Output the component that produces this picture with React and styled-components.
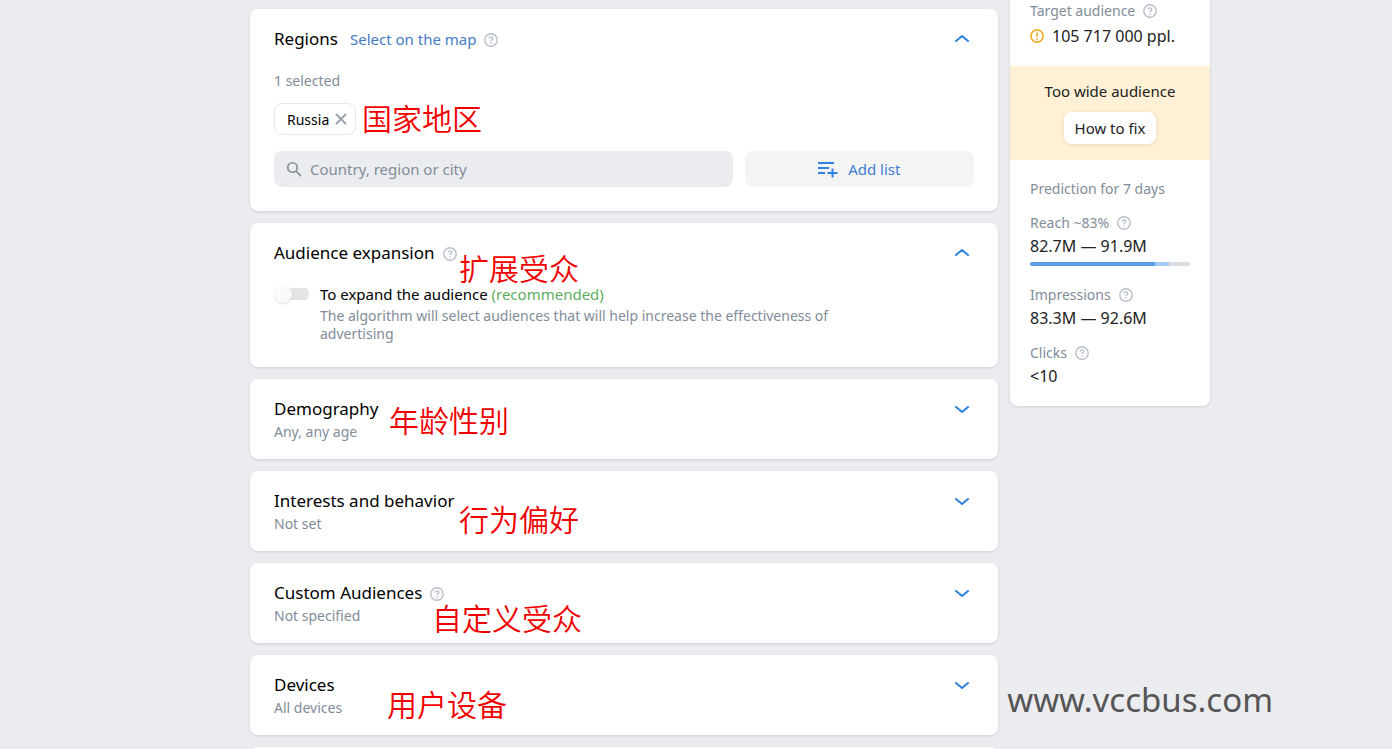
import React from 'react';
import styled, { createGlobalStyle } from 'styled-components';

const GlobalStyle = createGlobalStyle`
  * {
    box-sizing: border-box;
  }

  body {
    margin: 0;
    background: #ebecf0;
    font-family: "Noto Sans", "Noto Sans CJK SC", sans-serif;
    font-size: 14px;
    color: #000;
  }

  button, input {
    font-family: inherit;
  }
`
const Page = styled.div`
  position: relative;
  display: flex;
  align-items: flex-start;
  gap: 12px;
  height: 100vh;
  padding: 0 182px 0 250px;
  overflow: hidden;
`
const Main = styled.main`
  flex: 1;
  min-width: 0;
  display: flex;
  flex-direction: column;
  gap: 12px;
  padding-top: 9px;
`
const Card = styled.section`
  position: relative;
  min-height: 80px;
  padding: 18px 24px ${ props => props.$open ? '24px' : '16px' };
  background: #fff;
  border-radius: 8px;
  box-shadow: 0 1px 3px rgba(0, 16, 61, 0.12);
`
const HelpButton = styled.button`
  display: flex;
  margin-left: ${ props => props.$gap || '8px' };
  padding: 0;
  border: 0;
  background: none;
  color: #b9bfc9;
`
const CardHeader = styled.header`
  display: flex;
  align-items: center;
  height: 24px;
  margin-bottom: ${ props => props.$gap || '0' };

  ${HelpButton} {
    padding-top: 2px;
  }
`
const Title = styled.h2`
  margin: 0;
  font-size: 17px;
  font-weight: 400;
  line-height: 24px;
`
const MapLink = styled.a`
  margin-left: 12px;
  font-size: 15px;
  line-height: 24px;
  color: #447bc7;
  text-decoration: none;
`
const ToggleButton = styled.button`
  display: flex;
  margin-left: auto;
  padding: 0 4px;
  border: 0;
  background: none;
  color: #2d81e0;
`
const Muted = styled.div`
  font-size: 14px;
  line-height: 22px;
  color: #818c99;
`
const Tag = styled.div`
  display: inline-flex;
  align-items: center;
  gap: 6px;
  height: 32px;
  margin: 11px 0 16px;
  padding: 0 8px 0 12px;
  border: 1px solid #e7e8ec;
  border-radius: 8px;
  font-size: 14px;

  button {
    display: flex;
    padding: 0;
    border: 0;
    background: none;
    color: #99a2ad;
  }
`
const SearchRow = styled.div`
  display: grid;
  grid-template-columns: 2fr 1fr;
  gap: 12px;
`
const SearchBox = styled.label`
  display: flex;
  align-items: center;
  gap: 8px;
  height: 36px;
  padding: 0 12px;
  border-radius: 8px;
  background: #ebecf0;
  color: #818c99;

  input {
    flex: 1;
    min-width: 0;
    padding: 0;
    border: 0;
    outline: 0;
    background: none;
    font-size: 15px;
  }

  input::placeholder {
    color: #818c99;
    opacity: 1;
  }
`
const AddButton = styled.button`
  display: flex;
  align-items: center;
  justify-content: center;
  gap: 10px;
  height: 36px;
  border: 0;
  border-radius: 8px;
  background: #f4f4f5;
  color: #3f7fd4;
  font-size: 15px;
`
const SwitchRow = styled.div`
  display: flex;
  gap: 11px;
`
const Switch = styled.input`
  appearance: none;
  display: flex;
  align-items: center;
  width: 35px;
  height: 18px;
  margin: 2px 0;
  background: linear-gradient(#e5e5e6, #e5e5e6) right center / 30px 12px no-repeat;
  border-radius: 9px;

  &::before {
    content: '';
    width: 18px;
    height: 18px;
    border-radius: 50%;
    background: #fafafa;
    box-shadow: 0 1px 2px rgba(0, 0, 0, 0.14);
  }
`
const SwitchLabel = styled.label`
  font-size: 15px;
  line-height: 22px;

  span {
    color: #5caf60;
  }
`
const Description = styled.p`
  max-width: 540px;
  margin: 2px 0 0;
  font-size: 14px;
  line-height: 18px;
  color: #818c99;
`
const Note = styled.div`
  position: absolute;
  left: ${ props => props.$left };
  top: ${ props => props.$top };
  font-family: "Noto Sans CJK SC", sans-serif;
  font-size: 30px;
  font-weight: 350;
  line-height: 32px;
  white-space: nowrap;
  color: #f00000;
`
const Sidebar = styled.aside`
  flex: 0 0 200px;
  background: #fff;
  border-radius: 0 0 8px 8px;
  box-shadow: 0 1px 3px rgba(0, 16, 61, 0.12);
`
const SideSection = styled.div`
  padding: ${ props => props.$first ? '0' : '18px' } 20px 18px;
`
const SideLabel = styled.div`
  display: flex;
  align-items: center;
  font-size: 14px;
  line-height: 22px;
  color: #818c99;
`
const SideValue = styled.div`
  display: flex;
  align-items: center;
  gap: 8px;
  font-size: 16px;
  line-height: 24px;
  color: #222;
`
const Stat = styled.div`
  margin-top: ${ props => props.$gap || '12px' };
`
const Warning = styled.div`
  display: flex;
  flex-direction: column;
  align-items: center;
  gap: 10px;
  padding: 14px 20px 16px;
  background: #fff0d6;
  font-size: 15px;
  line-height: 22px;
  color: #222;

  button {
    height: 32px;
    padding: 0 11px;
    border: 0;
    border-radius: 8px;
    background: #fff;
    box-shadow: 0 1px 4px rgba(0, 0, 0, 0.1);
    font-size: 15px;
    color: #222;
  }
`
const ReachBar = styled.div`
  display: flex;
  height: 4px;
  margin-top: 4px;
  border-radius: 2px;
  background: #d9dde2;
  overflow: hidden;
`
const ReachPart = styled.div`
  background: ${ props => props.$color };
`
const Watermark = styled.div`
  position: absolute;
  right: 119px;
  bottom: 29px;
  font-size: 33px;
  line-height: 40px;
  color: #555;
`

const Help = ({ gap }) => (
  <HelpButton type="button" aria-label="Help" $gap={gap}>
    <svg width="14" height="14" viewBox="0 0 14 14" fill="none" stroke="currentColor">
      <circle cx="7" cy="7" r="6.2" strokeWidth="1.4" />
      <path d="M5.2 5.6C5.2 4.5 6 3.9 7 3.9s1.8.6 1.8 1.5C8.8 6.6 7 6.7 7 8.1" strokeWidth="1.3" />
      <circle cx="7" cy="9.9" r=".8" fill="currentColor" stroke="none" />
    </svg>
  </HelpButton>
)

const Chevron = ({ open, label }) => (
  <ToggleButton type="button" aria-label={label} aria-expanded={!!open}>
    <svg width="16" height="16" viewBox="0 0 16 16" fill="none" stroke="currentColor" strokeWidth="2" strokeLinecap="round" strokeLinejoin="round">
      <path d={open ? 'M2 10l6-5 6 5' : 'M2 6l6 5 6-5'} />
    </svg>
  </ToggleButton>
)

const sections = [
  { title: 'Demography', text: 'Any, any age', note: '年龄性别', left: '139px', top: '24px' },
  { title: 'Interests and behavior', text: 'Not set', note: '行为偏好', left: '209px', top: '31px' },
  { title: 'Custom Audiences', text: 'Not specified', help: true, note: '自定义受众', left: '182px', top: '38px' },
  { title: 'Devices', text: 'All devices', note: '用户设备', left: '137px', top: '32px' },
]

export default class App extends React.Component {
  renderSections() {
    return sections.map((section) => {
      return <Card key={section.title}>
        <CardHeader>
          <Title>{section.title}</Title>
          { section.help && <Help /> }
          <Chevron label={section.title} />
        </CardHeader>
        <Muted>{section.text}</Muted>
        <Note $left={section.left} $top={section.top}>{section.note}</Note>
      </Card>
    });
  }

  render() {
    return (
      <Page>
        <GlobalStyle />
        <Main>
          <Card $open>
            <CardHeader $gap="19px">
              <Title>Regions</Title>
              <MapLink href="#map">Select on the map</MapLink>
              <Help />
              <Chevron open label="Regions" />
            </CardHeader>
            <Muted>1 selected</Muted>
            <Tag>
              Russia
              <button type="button" aria-label="Remove Russia">
                <svg width="12" height="12" viewBox="0 0 12 12" stroke="currentColor" strokeWidth="1.9" strokeLinecap="round">
                  <path d="M1.5 1.500l9 9M10.500 1.500l-9 9" />
                </svg>
              </button>
            </Tag>
            <SearchRow>
              <SearchBox>
                <svg width="16" height="16" viewBox="0 0 16 16" fill="none" stroke="currentColor" strokeWidth="1.6" strokeLinecap="round">
                  <circle cx="6.5" cy="6.5" r="4.7" />
                  <path d="M10.2 10.2l4.4 4.400" />
                </svg>
                <input type="text" aria-label="Region" placeholder="Country, region or city" />
              </SearchBox>
              <AddButton type="button">
                <svg width="20" height="18" viewBox="0 0 20 18" fill="none" stroke="#2d81e0" strokeWidth="2">
                  <path d="M0 3h16M0 8h11M0 13h7M9.500 13h10M14.500 8.500v9" />
                </svg>
                Add list
              </AddButton>
            </SearchRow>
            <Note $left="112px" $top="92px">国家地区</Note>
          </Card>
          <Card $open>
            <CardHeader $gap="18px">
              <Title>Audience expansion</Title>
              <Help />
              <Chevron open label="Audience expansion" />
            </CardHeader>
            <SwitchRow>
              <Switch type="checkbox" id="expand" />
              <div>
                <SwitchLabel htmlFor="expand">To expand the audience <span>(recommended)</span></SwitchLabel>
                <Description>
                  The algorithm will select audiences that will help increase the effectiveness of advertising
                </Description>
              </div>
            </SwitchRow>
            <Note $left="209px" $top="28px">扩展受众</Note>
          </Card>
          { this.renderSections() }
          <Card />
        </Main>
        <Sidebar>
          <SideSection $first>
            <SideLabel>Target audience <Help /></SideLabel>
            <Stat $gap="2px">
              <SideValue>
                <svg width="14" height="14" viewBox="0 0 14 14" fill="none" stroke="#f0b02c" strokeWidth="1.7">
                  <circle cx="7" cy="7" r="6.1" />
                  <path d="M7 3.400v4.400M7 9.200v1.600" />
                </svg>
                105 717 000 ppl.
              </SideValue>
            </Stat>
          </SideSection>
          <Warning>
            Too wide audience
            <button type="button">How to fix</button>
          </Warning>
          <SideSection>
            <SideLabel>Prediction for 7 days</SideLabel>
            <Stat>
              <SideLabel>Reach ~83% <Help /></SideLabel>
              <SideValue>82.7M — 91.9M</SideValue>
              <ReachBar>
                <ReachPart $color="#5c9ce6" style={{ width: '78%' }} />
                <ReachPart $color="#a3c8f3" style={{ width: '9%' }} />
              </ReachBar>
            </Stat>
            <Stat $gap="18px">
              <SideLabel>Impressions <Help /></SideLabel>
              <SideValue>83.3M — 92.6M</SideValue>
            </Stat>
            <Stat>
              <SideLabel>Clicks <Help /></SideLabel>
              <SideValue>&lt;10</SideValue>
            </Stat>
          </SideSection>
        </Sidebar>
        <Watermark>www.vccbus.com</Watermark>
      </Page>
    );
  }
}
